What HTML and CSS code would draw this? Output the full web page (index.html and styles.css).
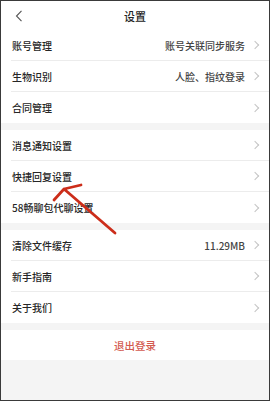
FILE: index.html
```html
<!DOCTYPE html>
<html lang="zh">
<head>
<meta charset="utf-8">
<link rel="stylesheet" href="styles.css">
</head>
<body>
<div class="screen">
  <header class="topbar">
    <svg class="back" width="8" height="12" viewBox="0 0 8 12"><path d="M6.5 0.8 L1.5 6 L6.5 11.2" fill="none" stroke="#555" stroke-width="1.1"/></svg>
    <div class="title">设置</div>
  </header>
  <div class="group">
    <div class="row"><span class="label">账号管理</span><span class="value">账号关联同步服务</span><span class="chev"></span></div>
    <div class="row"><span class="label">生物识别</span><span class="value">人脸、指纹登录</span><span class="chev"></span></div>
    <div class="row"><span class="label">合同管理</span><span class="chev"></span></div>
  </div>
  <div class="group">
    <div class="row"><span class="label">消息通知设置</span><span class="chev"></span></div>
    <div class="row"><span class="label">快捷回复设置</span><span class="chev"></span></div>
    <div class="row"><span class="label">58畅聊包代聊设置</span><span class="chev"></span></div>
  </div>
  <div class="group">
    <div class="row"><span class="label">清除文件缓存</span><span class="value">11.29MB</span><span class="chev"></span></div>
    <div class="row"><span class="label">新手指南</span><span class="chev"></span></div>
    <div class="row"><span class="label">关于我们</span><span class="chev"></span></div>
  </div>
  <div class="logout">退出登录</div>
  <svg class="arrow" width="270" height="401" viewBox="0 0 270 401"><path d="M115 233 L64 189 M81 185 L64 189 L54 200" fill="none" stroke="#cc2d1a" stroke-width="2.8" stroke-linecap="round" stroke-linejoin="round"/></svg>
</div>
</body>
</html>
```
FILE: styles.css
```css
html, body {
  margin: 0;
  padding: 0;
}
body {
  font-family: "Noto Sans CJK SC", "Noto Sans", sans-serif;
  color: #333;
}
.screen {
  position: relative;
  width: 270px;
  height: 401px;
  box-sizing: border-box;
  border: 1px solid #3a3a3a;
  background: #f4f4f4;
  display: flex;
  flex-direction: column;
  gap: 7px;
  overflow: hidden;
}
.topbar {
  height: 29px;
  background: #fff;
  position: relative;
  display: flex;
  align-items: center;
  justify-content: center;
  margin-bottom: -7px;
}
.back {
  position: absolute;
  left: 14px;
  top: 9px;
}
.title {
  font-size: 11px;
  font-weight: 500;
  color: #222;
}
.group {
  background: #fff;
  padding-left: 10px;
}
.row {
  height: 31px;
  box-sizing: border-box;
  display: flex;
  align-items: center;
  padding-right: 11px;
  border-bottom: 1px solid #ececec;
  font-size: 10px;
}
.row:last-child {
  border-bottom: none;
}
.label {
  flex: 1;
  padding-left: 1px;
  color: #262626;
  font-weight: 500;
}
.value {
  color: #444;
  margin-right: 7px;
  font-weight: 500;
}
.chev {
  width: 5px;
  height: 5px;
  border-top: 1px solid #c4c4c4;
  border-right: 1px solid #c4c4c4;
  transform: rotate(45deg);
}
.logout {
  background: #fff;
  height: 30px;
  display: flex;
  align-items: center;
  justify-content: center;
  font-size: 10.5px;
  font-weight: 500;
  color: #d35a50;
}
.arrow {
  position: absolute;
  left: -1px;
  top: -1px;
  pointer-events: none;
}
```
